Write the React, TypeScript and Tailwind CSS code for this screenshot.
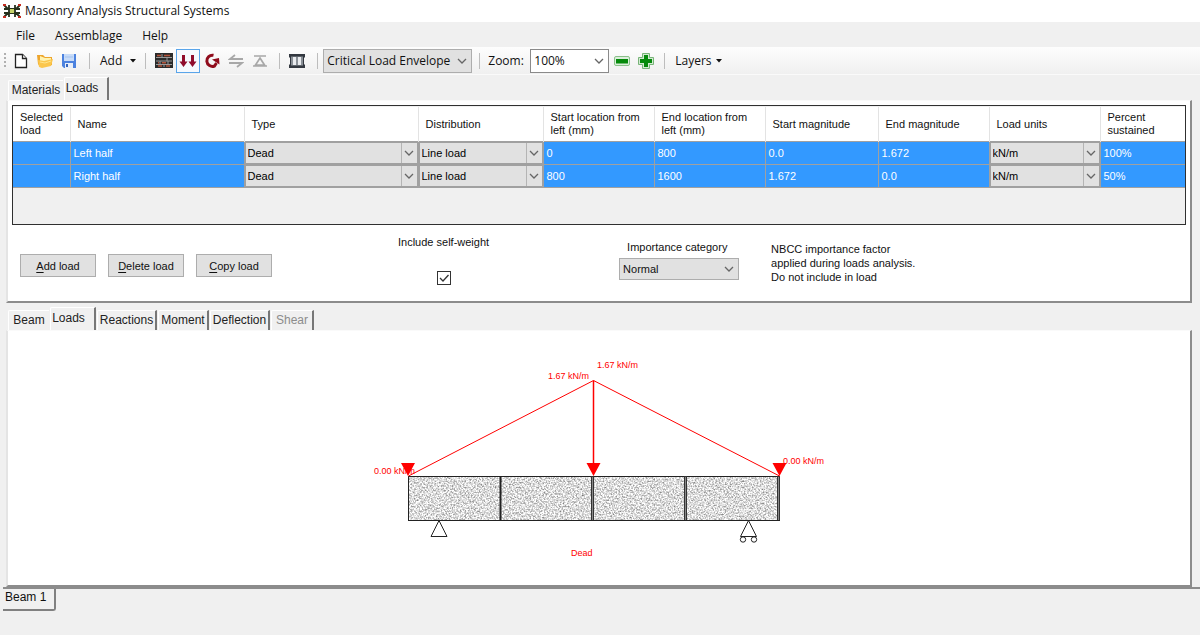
import { useState, type ReactNode } from "react";
import clsx from "clsx";

const columns = [
    { label: "Selected load", width: 57 },
    { label: "Name", width: 174 },
    { label: "Type", width: 174 },
    { label: "Distribution", width: 125 },
    { label: "Start location from left (mm)", width: 111 },
    { label: "End location from left (mm)", width: 111 },
    { label: "Start magnitude", width: 113 },
    { label: "End magnitude", width: 111 },
    { label: "Load units", width: 111 },
    { label: "Percent sustained", width: 85 },
];

const loads = [
    { name: "Left half", type: "Dead", distribution: "Line load", start: "0", end: "800", startMag: "0.0", endMag: "1.672", units: "kN/m", sustained: "100%" },
    { name: "Right half", type: "Dead", distribution: "Line load", start: "800", end: "1600", startMag: "1.672", endMag: "0.0", units: "kN/m", sustained: "50%" },
];

const inputTabs = [{ label: "Materials", width: "w-[55px]" }, { label: "Loads", width: "w-[45px]" }];
const resultTabs = [
    { label: "Beam", width: "w-[41px]" },
    { label: "Loads", width: "w-[46px]" },
    { label: "Reactions", width: "w-[60px]" },
    { label: "Moment", width: "w-[51px]" },
    { label: "Deflection", width: "w-[60px]" },
    { label: "Shear", width: "w-[43px]", disabled: true },
];

function Chevron({ className }: { className?: string }) {
    return (
        <svg viewBox="0 0 10 6" className={clsx("pointer-events-none absolute top-1/2 h-[6px] w-[10px] -translate-y-1/2", className)} fill="none" stroke="#666" strokeWidth="1.3">
            <path d="M1 1l4 4 4-4" />
        </svg>
    );
}

function Caret() {
    return (
        <svg viewBox="0 0 6 4" className="h-1 w-1.5"><path d="M0 0h6L3 3.6z" fill="#111" /></svg>
    );
}

function CellSelect({ value, label }: { value: string; label: string }) {
    return (
        <div className="relative h-full border border-[#a0a0a0] bg-[#e1e1e1]">
            <select aria-label={label} defaultValue={value} className="block h-full w-full appearance-none bg-transparent pl-[2px] text-black outline-none">
                <option>{value}</option>
            </select>
            <span className="pointer-events-none absolute inset-y-0 right-0 w-4 border-l border-[#b4b4b4]">
                <Chevron className="left-[2px]" />
            </span>
        </div>
    );
}

function Tabs({ items, active, onSelect }: { items: { label: string; width: string; disabled?: boolean }[]; active: string; onSelect: (label: string) => void }) {
    return (
        <div role="tablist" className="ml-2 flex h-[23px] items-end gap-px text-[12px]">
            {items.map((tab, index) => {
                const selected = tab.label === active;
                const beforeSelected = items[index + 1]?.label === active;
                return (
                    <button
                        key={tab.label}
                        role="tab"
                        aria-selected={selected}
                        disabled={tab.disabled}
                        onClick={() => onSelect(tab.label)}
                        className={clsx(
                            "flex shrink-0 justify-center rounded-tl-[2px] border-t border-l border-white leading-4 text-[#222] disabled:text-[#8c8c8c]",
                            tab.width,
                            selected ? "h-[23px] pt-[2px] pr-2" : "h-5 pt-px",
                            !beforeSelected && "border-r-2 border-r-[#777]",
                        )}
                    >
                        {tab.label}
                    </button>
                );
            })}
        </div>
    );
}

function Panel({ children, className }: { children: ReactNode; className?: string }) {
    return (
        <section className={clsx("mr-2 ml-[6px] border-t border-r-2 border-b-2 border-l-2 border-t-[#fafafa] border-r-[#8c8c8c] border-b-[#8c8c8c] border-l-[#e4e4e4] bg-white", className)}>
            {children}
        </section>
    );
}

function ToolButton({ label, active, children }: { label: string; active?: boolean; children: ReactNode }) {
    return (
        <button aria-label={label} className={clsx("flex h-6 w-6 shrink-0 items-center justify-center border", active ? "border-[#5aa5ea] bg-[#f6f9fd]" : "border-transparent")}>
            {children}
        </button>
    );
}

function Separator({ className }: { className?: string }) {
    return <span className={clsx("h-4 w-px shrink-0 bg-[#bdbdbd]", className)} />;
}

function Toolbar() {
    return (
        <div role="toolbar" className="flex h-7 items-center border-b border-[#fafafa] bg-linear-to-b from-[#fdfdfd] to-[#f0f0f0] pt-px">
            <svg viewBox="0 0 4 16" className="mr-[2px] ml-[3px] h-4 w-1" fill="#b0b0b0">
                <path d="M1 0h2v2H1zM1 4h2v2H1zM1 8h2v2H1zM1 12h2v2H1z" />
            </svg>
            <ToolButton label="New">
                <svg viewBox="0 0 16 16" className="size-4" fill="#fff" stroke="#222" strokeWidth="1.3">
                    <path d="M2.5 1.5h7l4 4v9h-11z" /><path d="M9.5 1.5v4h4" />
                </svg>
            </ToolButton>
            <ToolButton label="Open">
                <svg viewBox="0 0 18 16" className="h-4 w-[18px] shrink-0">
                    <path d="M1 2h6l2 2h7v8L4 14 2 11z" fill="#eda52c" />
                    <path d="M4 3l5 2h6v3H4z" fill="#fff3b0" />
                    <path d="M2 7l6 1 9-2-2 7-9 2-3-1z" fill="#fbc64c" />
                    <path d="M4 9l5 1 6-2" fill="none" stroke="#ffe58b" />
                </svg>
            </ToolButton>
            <ToolButton label="Save">
                <svg viewBox="0 0 16 16" className="size-4">
                    <path d="M1 1h14v14H3l-2-2z" fill="#4c82df" />
                    <path d="M3 1h10v7H3z" fill="#c8dcf8" />
                    <path d="M4 4h8" stroke="#a4c2ef" />
                    <path d="M4 10h8v5H4z" fill="#e8eef8" /><path d="M5 11h2v3H5z" fill="#3565bd" />
                </svg>
            </ToolButton>
            <Separator className="ml-2" />
            <button className="ml-[10px] flex items-center gap-2">Add <Caret /></button>
            <Separator className="mr-[6px] ml-[9px]" />
            <ToolButton label="Masonry">
                <svg viewBox="0 0 18 16" className="h-4 w-[18px] shrink-0">
                    <path d="M0 0h18v15H0z" fill="#2b2b2b" />
                    <path d="M1 4.500h16M1 8h16M1 11.500h16" stroke="#999" />
                    <path d="M7 1v3M12 4.500V8M5 8v3.500M13 8v3.500M9 11.500V14" stroke="#999" />
                    <path d="M2 2.500h4M9 2.500h6M3 9.800h1M7 9.800h4M3 13h4M11 13h4" stroke="#b4533a" strokeWidth="1.4" />
                </svg>
            </ToolButton>
            <ToolButton label="Loads" active>
                <svg viewBox="0 0 18 14" className="h-[14px] w-[18px] shrink-0" fill="#900c2c">
                    <path d="M3 1h3v6.500H8.500L4.500 13 .500 7.500H3zM12 1h3v6.500H17.500L13.500 13 9.500 7.500H12z" />
                </svg>
            </ToolButton>
            <ToolButton label="Moment">
                <svg viewBox="0 0 16 16" className="size-4" fill="none" stroke="#900c1c" strokeWidth="3">
                    <path d="M9.500 2.300A5.600 5.600 0 1 0 10.500 13L12.500 10" />
                    <path d="M8 6.500L15 5 15.500 11.500z" fill="#900c1c" stroke="none" />
                </svg>
            </ToolButton>
            <ToolButton label="Swap">
                <svg viewBox="0 0 16 16" className="size-4" fill="none" stroke="#a8a8a8" strokeWidth="1.8">
                    <path d="M15 6H2L7 2M1 10h13L9 14" />
                </svg>
            </ToolButton>
            <ToolButton label="Support">
                <svg viewBox="0 0 16 16" className="size-4" fill="none" stroke="#a8a8a8" strokeWidth="1.7">
                    <path d="M2 3h12M8 5l4.500 7h-9zM1 13h14" />
                </svg>
            </ToolButton>
            <Separator className="mr-[5px] ml-[7px]" />
            <ToolButton label="Section">
                <svg viewBox="0 0 18 14" className="h-[14px] w-[18px] shrink-0">
                    <path d="M1 0h16v3l-1 1v6l1 1v3H1v-3l1-1V4L1 3z" fill="#333840" />
                    <path d="M3 2.500h12v9H3z" fill="#8a9097" />
                    <path d="M5 3h3v8H5zM10 3h3v8h-3z" fill="#e9ebee" />
                </svg>
            </ToolButton>
            <Separator className="mr-[5px] ml-2" />
            <div className="relative h-6 w-[149px] shrink-0 border border-[#adadad] bg-[#e1e1e1]">
                <select aria-label="Load case" className="block h-full w-full appearance-none bg-transparent pl-[3px] outline-none">
                    <option>Critical Load Envelope</option>
                </select>
                <Chevron className="right-1" />
            </div>
            <Separator className="mr-2 ml-[7px]" />
            <label htmlFor="zoom" className="w-[42px] shrink-0">Zoom:</label>
            <div className="relative h-6 w-[79px] shrink-0 border border-[#8a8a8a] bg-white">
                <select id="zoom" className="block h-full w-full appearance-none bg-transparent pl-[3px] outline-none">
                    <option>100%</option>
                </select>
                <Chevron className="right-1" />
            </div>
            <div className="ml-px flex">
                <ToolButton label="Zoom out">
                    <svg viewBox="0 0 16 16" className="size-4">
                        <rect x=".5" y="3.5" width="15" height="9" rx="1.5" fill="#dcefdc" stroke="#8ac08a" />
                        <path d="M2 6h12v4.500H2z" fill="#058a0b" />
                    </svg>
                </ToolButton>
                <ToolButton label="Zoom in">
                    <svg viewBox="0 0 16 16" className="size-4">
                        <path d="M4.500.500h7v4h4v7h-4v4h-7v-4h-4v-7h4z" fill="#d2ead2" stroke="#78b478" />
                        <path d="M6 2h4v4h4v4h-4v4H6v-4H2V6h4z" fill="#058a0b" />
                    </svg>
                </ToolButton>
            </div>
            <Separator className="ml-[6px]" />
            <button className="ml-[10px] flex items-center gap-1">Layers <Caret /></button>
        </div>
    );
}

function LoadsTable() {
    return (
        <div className="mx-1 mt-1 h-[120px] border border-[#303030] bg-[#f0f0f0] pt-px">
            <table className="w-full table-fixed border-collapse text-left">
                <colgroup>
                    {columns.map((c) => <col key={c.label} style={{ width: c.width }} />)}
                </colgroup>
                <thead className="bg-white">
                    <tr className="h-[34px]">
                        {columns.map((c) => (
                            <th key={c.label} className="border-r border-[#e3e3e3] p-0 pt-px pl-[7px] leading-[13px] font-normal last:border-r-0">{c.label}</th>
                        ))}
                    </tr>
                </thead>
                <tbody>
                    {loads.map((load) => (
                        <tr key={load.name} className="h-[23px] bg-[#3399ff] text-white [&>td]:border [&>td]:border-[#a0a0a0] [&>td]:p-0 [&>td:first-child]:border-l-0 [&>td:last-child]:border-r-0">
                            <td></td>
                            <td><span className="pl-[3px]">{load.name}</span></td>
                            <td className="h-[23px]"><CellSelect label="Type" value={load.type} /></td>
                            <td className="h-[23px]"><CellSelect label="Distribution" value={load.distribution} /></td>
                            <td><span className="pl-[3px]">{load.start}</span></td>
                            <td><span className="pl-[3px]">{load.end}</span></td>
                            <td><span className="pl-[3px]">{load.startMag}</span></td>
                            <td><span className="pl-[3px]">{load.endMag}</span></td>
                            <td className="h-[23px]"><CellSelect label="Load units" value={load.units} /></td>
                            <td><span className="pl-[3px]">{load.sustained}</span></td>
                        </tr>
                    ))}
                </tbody>
            </table>
        </div>
    );
}

function LoadControls() {
    const [selfWeight, setSelfWeight] = useState(true);
    return (
        <div className="flex items-start pl-3">
            <div className="mt-[29px] flex gap-3">
                {["Add load", "Delete load", "Copy load"].map((label) => (
                    <button key={label} className="h-[23px] w-[76px] border border-[#adadad] bg-[#e1e1e1]">
                        <u className="underline-offset-2">{label[0]}</u>{label.slice(1)}
                    </button>
                ))}
            </div>
            <label className="mt-[10px] ml-[126px] flex flex-col items-center gap-[22px]">
                Include self-weight
                <span className="relative size-[14px]">
                    <input type="checkbox" checked={selfWeight} onChange={(e) => setSelfWeight(e.target.checked)} className="block size-[14px] appearance-none border border-[#333] bg-white" />
                    {selfWeight && (
                        <svg viewBox="0 0 14 14" className="pointer-events-none absolute inset-0" fill="none" stroke="#333" strokeWidth="1.3"><path d="M3 7l3 3 5.500-6" /></svg>
                    )}
                </span>
            </label>
            <div className="mt-[15px] ml-[130px] w-[120px]">
                <label htmlFor="importance" className="block pl-2">Importance category</label>
                <div className="relative mt-1 h-[22px] border border-[#adadad] bg-[#e1e1e1]">
                    <select id="importance" className="block h-full w-full appearance-none bg-transparent pl-[3px] outline-none">
                        <option>Normal</option>
                    </select>
                    <Chevron className="right-1" />
                </div>
            </div>
            <p className="mt-[17px] ml-8 w-[150px] leading-[14px]">
                NBCC importance factor applied during loads analysis. Do not include in load
            </p>
        </div>
    );
}

function BeamDiagram() {
    return (
        <svg viewBox="360 350 478 215" className="h-[215px] w-[478px]" fill="none" role="img" aria-label="Dead load on beam">
            <defs>
                {/* speckled concrete block fill */}
                <filter id="concrete" x="0" y="0" width="100%" height="100%" colorInterpolationFilters="sRGB">
                    <feTurbulence type="fractalNoise" baseFrequency="0.63" numOctaves="2" seed="7" />
                    <feColorMatrix values="1 0 0 0 0.36  1 0 0 0 0.36  1 0 0 0 0.36  0 0 0 0 1" />
                </filter>
            </defs>
            <g fill="#f00" fontSize="9">
                <text x="548" y="379">1.67 kN/m</text>
                <text x="597" y="368">1.67 kN/m</text>
                <text x="374" y="474">0.00 kN/m</text>
                <text x="783" y="464">0.00 kN/m</text>
                <text x="571" y="556">Dead</text>
            </g>
            <rect x="408" y="476" width="372" height="44" filter="url(#concrete)" />
            <rect x="408.5" y="476.5" width="371" height="44" stroke="#222" />
            <path d="M500.500 476v44" stroke="#222" strokeWidth="2" />
            <path d="M592.500 476v44M685.500 476v44M778.500 476v44" stroke="#333" strokeWidth="3" />
            <path d="M592.500 477v43M685.500 477v43M778.500 477v43" stroke="#888" />
            <path d="M408.500 476L593.500 380.500 779.500 476" stroke="#f00" />
            <path d="M593.500 380.500v90" stroke="#f00" strokeWidth="1.5" />
            <path d="M401 463h14l-7 13zM586.500 463h14l-7 13zM772.500 463h14l-7 13z" fill="#f00" />
            <path d="M439 520.500l8 16h-16zM748.500 520.500l8 16h-16z" stroke="#222" />
            <circle cx="743" cy="539.5" r="2.7" stroke="#222" />
            <circle cx="754" cy="539.5" r="2.7" stroke="#222" />
        </svg>
    );
}

export default function App() {
    const [inputTab, setInputTab] = useState("Loads");
    const [resultTab, setResultTab] = useState("Loads");
    return (
        <div className="min-h-screen bg-[#f0f0f0] font-['Liberation_Sans',sans-serif] text-[11px] leading-[14px] text-[#111]">
            <div className="font-['Open_Sans','Noto_Sans',sans-serif] text-[12px] leading-4">
                <header className="flex h-[22px] items-center gap-1 bg-white pl-[3px]">
                    <svg viewBox="0 0 18 14" className="h-[14px] w-[18px]">
                        <path d="M1 1l4 4h8l4-4M1 13l4-4h8l4 4M6 1v12M12 1v12M1 5h16M1 9h16" stroke="#26301c" strokeWidth="1.8" fill="none" />
                        <path d="M0 0h3v2H0zM15 0h3v2h-3zM0 12h3v2H0zM15 12h3v2h-3z" fill="#c32d20" />
                        <path d="M7 5h4v4H7z" fill="#c7d36a" />
                    </svg>
                    <h1>Masonry Analysis Structural Systems</h1>
                </header>
                <nav className="flex h-[25px] items-center gap-5 pt-[2px] pl-4">
                    <button>File</button>
                    <button>Assemblage</button>
                    <button>Help</button>
                </nav>
                <Toolbar />
            </div>
            <main className="pt-[2px]">
                <Tabs items={inputTabs} active={inputTab} onSelect={setInputTab} />
                <Panel className="h-[203px]">
                    <LoadsTable />
                    <LoadControls />
                </Panel>
                <div className="pt-1">
                    <Tabs items={resultTabs} active={resultTab} onSelect={setResultTab} />
                </div>
                <Panel className="flex h-[257px] justify-center pt-[19px]">
                    <BeamDiagram />
                </Panel>
            </main>
            <footer className="ml-[3px] border-t-2 border-[#8c8c8c]">
                <button className="h-[22px] w-[53px] rounded-br-[3px] border-r-2 border-b-2 border-[#808080] pb-1 pl-[2px] text-left text-[12px]">Beam 1</button>
            </footer>
        </div>
    );
}
